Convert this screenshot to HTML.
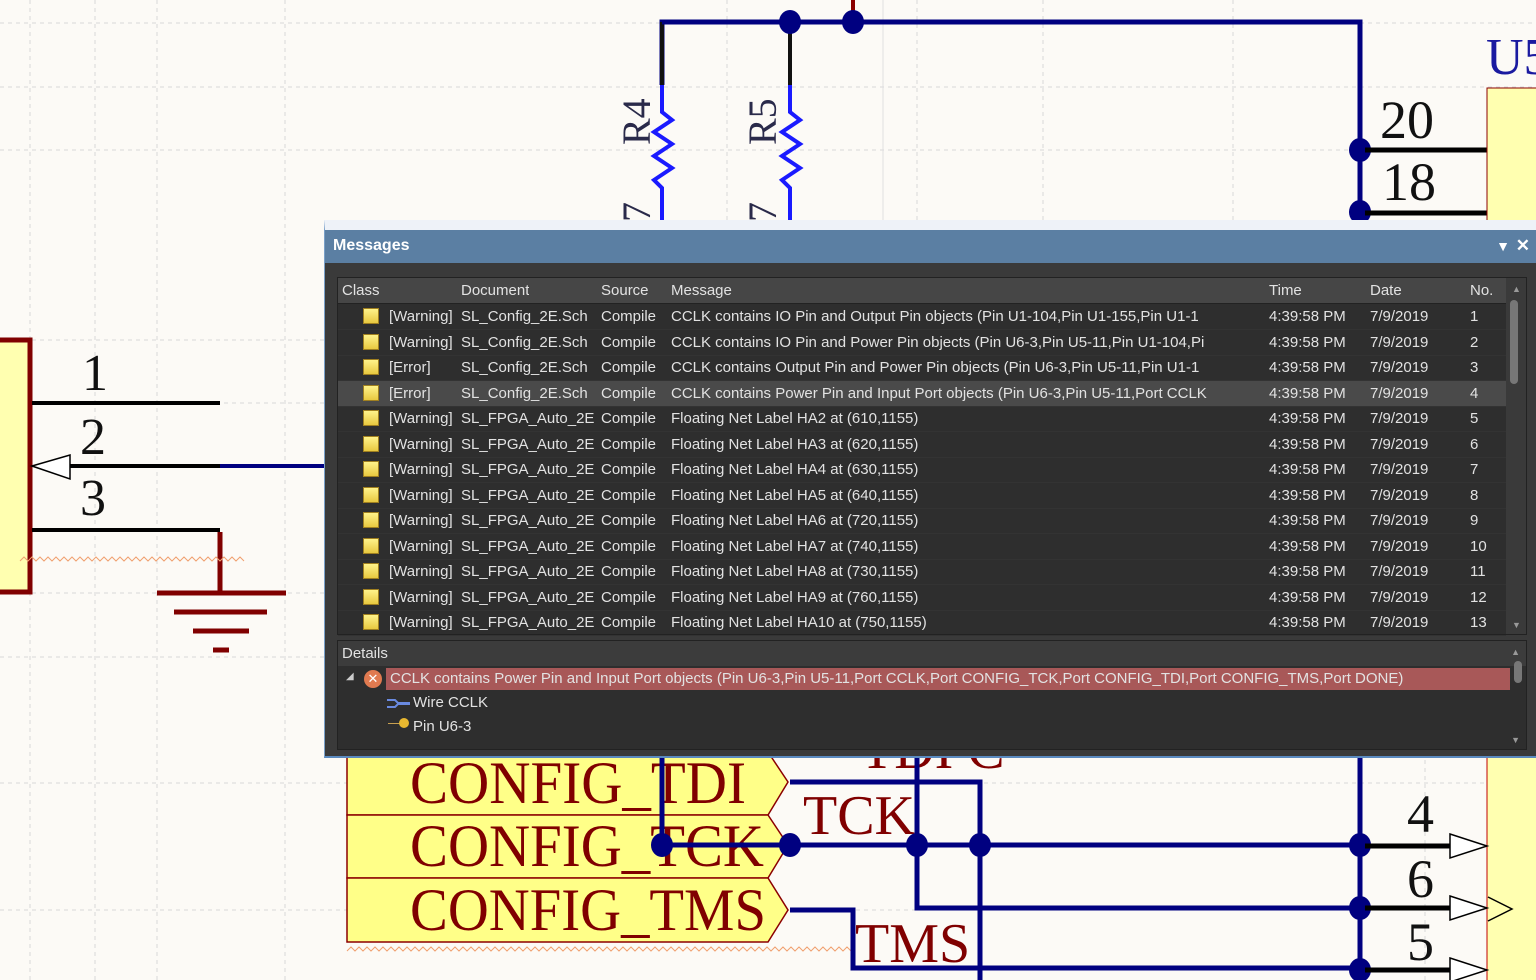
<!DOCTYPE html>
<html><head><meta charset="utf-8"><style>
body{margin:0;width:1536px;height:980px;overflow:hidden;background:#fcfaf6;position:relative;font-family:"Liberation Sans",sans-serif}
svg.s{position:absolute;left:0;top:0}
.p{position:absolute;left:324px;top:220px;width:1212px;height:538px;background:#3a3a3a;border-top:10px solid #eef2f8;border-left:1px solid #7aa0c8;border-bottom:2px solid #5a8ac0;box-sizing:border-box}
.t{height:33px;background:#5b7fa3;color:#fff;font-weight:bold;font-size:16px;line-height:32px;padding-left:8px;position:relative}
.t span{position:absolute;top:0;font-size:14px}
.tb{position:absolute;left:12px;top:47px;width:1188px;height:356px;background:#2e2e2e;border:1px solid #222}
.r{position:absolute;left:0;height:25px;width:1168px;font-size:15px;color:#e2e2e2;line-height:25px;white-space:nowrap;border-bottom:1px solid #333}
.c{position:absolute;top:0;overflow:hidden;height:25px}
.h{background:#464646;border-bottom:1px solid #222}
.ic{position:absolute;left:25px;top:4px;width:16px;height:16px;background:linear-gradient(#fff28a,#e8c840);border:1px solid #a08020;box-sizing:border-box}
.sb{position:absolute;right:0;top:0;width:20px;height:356px;background:#3a3a3a}
.th{position:absolute;left:4px;top:22px;width:8px;height:84px;background:#777;border-radius:4px}
.d{position:absolute;left:12px;top:410px;width:1188px;height:108px;background:#2e2e2e;border:1px solid #222;color:#e2e2e2;font-size:15px}
</style></head><body>
<svg class="s" width="1536" height="980" viewBox="0 0 1536 980">
<g stroke="#d8d8d8" stroke-dasharray="4 4" stroke-width="1">
<line x1="0" y1="23" x2="1536" y2="23"/><line x1="0" y1="87" x2="1536" y2="87"/><line x1="0" y1="150" x2="1536" y2="150"/><line x1="0" y1="340" x2="330" y2="340"/><line x1="0" y1="403" x2="330" y2="403"/><line x1="0" y1="593" x2="330" y2="593"/><line x1="0" y1="657" x2="330" y2="657"/><line x1="0" y1="783" x2="1536" y2="783"/><line x1="0" y1="910" x2="1536" y2="910"/>
<line x1="30" y1="0" x2="30" y2="980"/><line x1="95" y1="0" x2="95" y2="980"/><line x1="157" y1="0" x2="157" y2="980"/><line x1="285" y1="0" x2="285" y2="980"/><line x1="727" y1="0" x2="727" y2="220"/><line x1="917" y1="0" x2="917" y2="220"/><line x1="1043" y1="0" x2="1043" y2="220"/><line x1="1233" y1="0" x2="1233" y2="220"/><line x1="1425" y1="760" x2="1425" y2="980"/>
</g>
<line x1="883" y1="0" x2="883" y2="220" stroke="#e0e0e0"/>
<line x1="853" y1="0" x2="853" y2="22" stroke="#8b0000" stroke-width="4"/>
<polyline points="662,85 662,22 1360,22 1360,220" fill="none" stroke="#000080" stroke-width="5"/>
<line x1="662" y1="22" x2="662" y2="85" stroke="#111" stroke-width="4"/>
<line x1="790" y1="22" x2="790" y2="85" stroke="#111" stroke-width="4"/>
<line x1="662" y1="22" x2="700" y2="22" stroke="#000080" stroke-width="5"/>
<path d="M662 85V112l10 8-18 12 18 12-18 12 18 12-18 12 8 8V220" fill="none" stroke="#1a1aff" stroke-width="4"/>
<path d="M790 85V112l10 8-18 12 18 12-18 12 18 12-18 12 8 8V220" fill="none" stroke="#1a1aff" stroke-width="4"/>
<g fill="#000080"><ellipse cx="790" cy="22" rx="11" ry="12"/><ellipse cx="853" cy="22" rx="11" ry="12"/><ellipse cx="1360" cy="150" rx="11" ry="12"/><ellipse cx="1360" cy="212" rx="11" ry="12"/></g>
<g font-family="Liberation Serif,serif" fill="#2a2a4a" font-size="40">
<text transform="translate(650,145) rotate(-90)">R4</text><text transform="translate(776,145) rotate(-90)">R5</text>
<text transform="translate(650,222) rotate(-90)">7</text><text transform="translate(776,222) rotate(-90)">7</text></g>
<g stroke="#000" stroke-width="5"><line x1="1365" y1="150" x2="1490" y2="150"/><line x1="1365" y1="213" x2="1490" y2="213"/></g>
<g font-family="Liberation Serif,serif" font-size="54" fill="#111"><text x="1380" y="138">20</text><text x="1382" y="200">18</text></g>
<text x="1486" y="74" font-family="Liberation Serif,serif" font-size="52" fill="#1a1aa0">U5</text>
<rect x="1487" y="88" width="60" height="140" fill="#ffffb0" stroke="#8b0000" stroke-width="1"/>
<rect x="-10" y="340" width="40" height="252" fill="#ffffb0" stroke="#800000" stroke-width="5"/>
<g stroke="#000" stroke-width="4"><line x1="32" y1="403" x2="220" y2="403"/><line x1="70" y1="466" x2="220" y2="466"/><line x1="32" y1="530" x2="220" y2="530"/></g>
<polygon points="32,466 70,455 70,479" fill="#fff" stroke="#000" stroke-width="1.5"/>
<line x1="220" y1="466" x2="324" y2="466" stroke="#000080" stroke-width="4"/>
<g font-family="Liberation Serif,serif" font-size="52" fill="#111"><text x="82" y="390">1</text><text x="80" y="454">2</text><text x="80" y="515">3</text></g>
<g stroke="#800000" stroke-width="5"><line x1="220" y1="532" x2="220" y2="592"/><line x1="157" y1="593" x2="286" y2="593"/><line x1="174" y1="612" x2="267" y2="612"/><line x1="193" y1="631" x2="249" y2="631"/><line x1="213" y1="650" x2="229" y2="650"/></g>
<path d="M20 561l4-4 4 4 4-4 4 4 4-4 4 4 4-4 4 4 4-4 4 4 4-4 4 4 4-4 4 4 4-4 4 4 4-4 4 4 4-4 4 4 4-4 4 4 4-4 4 4 4-4 4 4 4-4 4 4 4-4 4 4 4-4 4 4 4-4 4 4 4-4 4 4 4-4 4 4 4-4 4 4 4-4 4 4 4-4 4 4 4-4 4 4 4-4 4 4 4-4 4 4 4-4 4 4 4-4 4 4 4-4 4 4" fill="none" stroke="#f0a070" stroke-width="1"/>
<g fill="#ffff88" stroke="#8b0000" stroke-width="1.5">
<polygon points="347,752 768,752 788,782 768,815 347,815"/>
<polygon points="347,815 768,815 788,845 768,878 347,878"/>
<polygon points="347,878 768,878 788,910 768,942 347,942"/></g>
<path d="M347 951l4-4 4 4 4-4 4 4 4-4 4 4 4-4 4 4 4-4 4 4 4-4 4 4 4-4 4 4 4-4 4 4 4-4 4 4 4-4 4 4 4-4 4 4 4-4 4 4 4-4 4 4 4-4 4 4 4-4 4 4 4-4 4 4 4-4 4 4 4-4 4 4 4-4 4 4 4-4 4 4 4-4 4 4 4-4 4 4 4-4 4 4 4-4 4 4 4-4 4 4 4-4 4 4 4-4 4 4 4-4 4 4 4-4 4 4 4-4 4 4 4-4 4 4 4-4 4 4 4-4 4 4 4-4 4 4 4-4 4 4 4-4 4 4 4-4 4 4 4-4 4 4 4-4 4 4 4-4 4 4 4-4 4 4 4-4 4 4 4-4 4 4 4-4 4 4 4-4 4 4 4-4 4 4 4-4 4 4 4-4 4 4 4-4 4 4 4-4 4 4 4-4 4 4 4-4 4 4 4-4 4 4 4-4 4 4 4-4 4 4 4-4 4 4 4-4 4 4 4-4 4 4 4-4 4 4 4-4 4 4 4-4 4 4 4-4 4 4 4-4 4 4" fill="none" stroke="#f0a070" stroke-width="1"/>
<g font-family="Liberation Serif,serif" font-size="60" fill="#800000">
<text x="410" y="803" textLength="336" lengthAdjust="spacingAndGlyphs">CONFIG_TDI</text><text x="410" y="866" textLength="354" lengthAdjust="spacingAndGlyphs">CONFIG_TCK</text><text x="410" y="930" textLength="356" lengthAdjust="spacingAndGlyphs">CONFIG_TMS</text>
<text x="803" y="834" font-size="56">TCK</text><text x="855" y="962" font-size="56">TMS</text><text x="860" y="768" font-size="56">TDI C</text></g>
<g fill="none" stroke="#000080" stroke-width="5">
<polyline points="790,782 980,782 980,980"/>
<line x1="662" y1="758" x2="662" y2="845"/>
<line x1="662" y1="845" x2="1365" y2="845"/>
<polyline points="917,758 917,908 1365,908"/>
<polyline points="790,910 853,910 853,968 1365,968"/>
<line x1="1360" y1="758" x2="1360" y2="980"/></g>
<g fill="#000080"><ellipse cx="662" cy="845" rx="11" ry="12"/><ellipse cx="790" cy="845" rx="11" ry="12"/><ellipse cx="917" cy="845" rx="11" ry="12"/><ellipse cx="980" cy="845" rx="11" ry="12"/><ellipse cx="1360" cy="845" rx="11" ry="12"/><ellipse cx="1360" cy="908" rx="11" ry="12"/><ellipse cx="1360" cy="970" rx="11" ry="12"/></g>
<rect x="1487" y="758" width="60" height="222" fill="#ffffb0"/><line x1="1487" y1="758" x2="1487" y2="980" stroke="#c00000" stroke-width="1"/>
<g stroke="#000" stroke-width="5"><line x1="1365" y1="846" x2="1450" y2="846"/><line x1="1365" y1="908" x2="1450" y2="908"/><line x1="1365" y1="970" x2="1450" y2="970"/></g>
<g fill="#fff" stroke="#000" stroke-width="1.5"><polygon points="1450,834 1487,846 1450,858"/><polygon points="1450,896 1487,908 1450,920"/><polygon points="1450,958 1487,970 1450,982"/></g>
<polyline points="1488,897 1512,909 1488,921" fill="none" stroke="#000" stroke-width="1.5"/>
<g font-family="Liberation Serif,serif" font-size="54" fill="#111"><text x="1407" y="832">4</text><text x="1407" y="897">6</text><text x="1407" y="960">5</text></g>
</svg>
<div class="p">
<div class="t">Messages<span style="right:26px">▼</span><span style="right:6px;font-size:17px">✕</span></div>
<div class="tb">
<div class="r h" style="top:0"><div class="c" style="left:4px">Class</div><div class="c" style="left:123px">Document</div><div class="c" style="left:263px">Source</div><div class="c" style="left:333px">Message</div><div class="c" style="left:931px">Time</div><div class="c" style="left:1032px">Date</div><div class="c" style="left:1132px">No.</div></div>
<div id="rows"></div>
<div class="sb"><div class="th"></div><div style="position:absolute;left:6px;top:6px;color:#999;font-size:9px">▲</div><div style="position:absolute;left:6px;bottom:4px;color:#999;font-size:9px">▼</div></div>
</div>
<div class="d">
<div style="height:25px;line-height:25px;background:#3c3c3c;padding-left:4px">Details</div>
<div style="position:absolute;left:48px;top:27px;width:1120px;height:22px;background:#a85858;line-height:22px;padding-left:4px;white-space:nowrap;overflow:hidden">CCLK contains Power Pin and Input Port objects (Pin U6-3,Pin U5-11,Port CCLK,Port CONFIG_TCK,Port CONFIG_TDI,Port CONFIG_TMS,Port DONE)</div>
<div style="position:absolute;left:8px;top:30px;font-size:10px;color:#ccc">◢</div>
<div style="position:absolute;left:26px;top:29px;width:18px;height:18px;border-radius:50%;background:#e07a50;color:#fff;font-size:13px;text-align:center;line-height:18px">✕</div>
<svg style="position:absolute;left:48px;top:56px" width="26" height="14"><path d="M1 3h8l3 3h12M1 10h8l3-3h12" stroke="#6a8ae0" stroke-width="2" fill="none"/></svg>
<div style="position:absolute;left:75px;top:51px;line-height:22px">Wire CCLK</div>
<div style="position:absolute;left:50px;top:82px;width:12px;height:1px;background:#c8a050"></div>
<div style="position:absolute;left:61px;top:77px;width:10px;height:10px;border-radius:50%;background:#e8b830"></div>
<div style="position:absolute;left:75px;top:75px;line-height:22px">Pin U6-3</div>
<div style="position:absolute;right:6px;top:6px;color:#999;font-size:9px">▲</div><div style="position:absolute;right:4px;top:20px;width:8px;height:22px;background:#777;border-radius:4px"></div><div style="position:absolute;right:6px;bottom:4px;color:#999;font-size:9px">▼</div>
</div>
</div>
<script>
var m=["CCLK contains IO Pin and Output Pin objects (Pin U1-104,Pin U1-155,Pin U1-1","CCLK contains IO Pin and Power Pin objects (Pin U6-3,Pin U5-11,Pin U1-104,Pi","CCLK contains Output Pin and Power Pin objects (Pin U6-3,Pin U5-11,Pin U1-1","CCLK contains Power Pin and Input Port objects (Pin U6-3,Pin U5-11,Port CCLK"];
var h="";
for(var i=0;i<13;i++){var cls=(i==2||i==3)?"[Error]":"[Warning]",doc=i<4?"SL_Config_2E.Sch":"SL_FPGA_Auto_2E";
var msg=i<4?m[i]:"Floating Net Label HA"+(i-2)+" at ("+[610,620,630,640,720,740,730,760,750][i-4]+",1155)";
var bg=i==3?"background:#4a4a4a;":"";
h+='<div class="r" style="top:'+(26+i*25.5)+'px;'+bg+'"><div class="ic"></div><div class="c" style="left:51px;width:66px">'+cls+'</div><div class="c" style="left:123px;width:136px">'+doc+'</div><div class="c" style="left:263px;width:66px">Compile</div><div class="c" style="left:333px;width:594px">'+msg+'</div><div class="c" style="left:931px">4:39:58 PM</div><div class="c" style="left:1032px">7/9/2019</div><div class="c" style="left:1132px">'+(i+1)+'</div></div>';}
document.getElementById("rows").innerHTML=h;
</script>
</body></html>
